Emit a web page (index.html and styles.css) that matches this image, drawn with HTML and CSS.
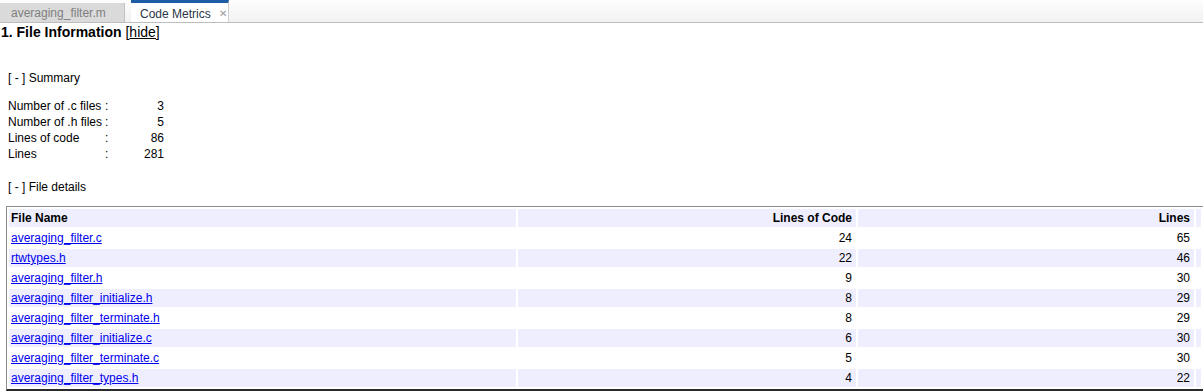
FILE: index.html
```html
<!DOCTYPE html>
<html>
<head>
<meta charset="utf-8">
<link rel="stylesheet" href="styles.css">
</head>
<body>
<div class="tabbar">
  <div class="tab tab-inactive">averaging_filter.m</div>
  <div class="tab tab-active"><span>Code Metrics</span><span class="close">✕</span></div>
</div>
<h3 class="section-title">1. File Information <span class="hide">[<u>hide</u>]</span></h3>

<div class="toggle toggle-summary">[ - ] Summary</div>
<table class="summary">
  <tr><td class="s-label">Number of .c files</td><td class="s-colon">:</td><td class="s-val">3</td></tr>
  <tr><td class="s-label">Number of .h files</td><td class="s-colon">:</td><td class="s-val">5</td></tr>
  <tr><td class="s-label">Lines of code</td><td class="s-colon">:</td><td class="s-val">86</td></tr>
  <tr><td class="s-label">Lines</td><td class="s-colon">:</td><td class="s-val">281</td></tr>
</table>

<div class="toggle toggle-details">[ - ] File details</div>
<table class="details">
  <colgroup>
    <col class="c-name"><col class="c-loc"><col class="c-lines"><col class="c-extra">
  </colgroup>
  <tr class="shade"><th class="left">File Name</th><th class="right">Lines of Code</th><th class="right">Lines</th><th></th></tr>
  <tr><td><a href="#">averaging_filter.c</a></td><td class="right">24</td><td class="right">65</td><td></td></tr>
  <tr class="shade"><td><a href="#">rtwtypes.h</a></td><td class="right">22</td><td class="right">46</td><td></td></tr>
  <tr><td><a href="#">averaging_filter.h</a></td><td class="right">9</td><td class="right">30</td><td></td></tr>
  <tr class="shade"><td><a href="#">averaging_filter_initialize.h</a></td><td class="right">8</td><td class="right">29</td><td></td></tr>
  <tr><td><a href="#">averaging_filter_terminate.h</a></td><td class="right">8</td><td class="right">29</td><td></td></tr>
  <tr class="shade"><td><a href="#">averaging_filter_initialize.c</a></td><td class="right">6</td><td class="right">30</td><td></td></tr>
  <tr><td><a href="#">averaging_filter_terminate.c</a></td><td class="right">5</td><td class="right">30</td><td></td></tr>
  <tr class="shade"><td><a href="#">averaging_filter_types.h</a></td><td class="right">4</td><td class="right">22</td><td></td></tr>
</table>
</body>
</html>
```

FILE: styles.css
```css
html, body {
  margin: 0;
  padding: 0;
  background: #ffffff;
  overflow: hidden;
}
body {
  font-family: "Liberation Sans", Arial, sans-serif;
  font-size: 12px;
  color: #000;
  width: 1203px;
  height: 391px;
}

/* tab bar */
.tabbar {
  height: 22px;
  border-bottom: 1px solid #bdbdbd;
  background: linear-gradient(#fdfdfd, #f2f2f2);
  display: flex;
  align-items: flex-end;
  gap: 6px;
}
.tab {
  box-sizing: border-box;
  height: 19px;
  font-size: 12px;
  line-height: 18px;
  display: flex;
  align-items: center;
}
.tab-inactive {
  width: 125px;
  padding-left: 11px;
  background: #dadada;
  color: #7f7f7f;
  border-right: 1px solid #c2c2c2;
}
.tab-active {
  width: 98px;
  height: 22px;
  padding-left: 9px;
  padding-top: 2px;
  background: #ffffff;
  color: #2b3547;
  border-top: 3px solid #1d5ca6;
  border-right: 1px solid #cfcfcf;
  align-self: flex-end;
}
.tab-active .close {
  margin-left: 8px;
  font-size: 10px;
  color: #9a9a9a;
}

/* heading */
.section-title {
  margin: 0;
  padding: 1px 0 0 1px;
  font-size: 14px;
  line-height: 16px;
  font-weight: bold;
}
.section-title .hide {
  font-weight: normal;
}

.toggle {
  margin-left: 8px;
  line-height: 14px;
}
.toggle-summary {
  margin-top: 31px;
}
.toggle-details {
  margin-top: 18px;
}

/* summary table */
.summary {
  margin: 13px 0 0 8px;
  border-collapse: collapse;
}
.summary td {
  padding: 0;
  height: 16px;
  line-height: 16px;
}
.s-label {
  width: 97px;
}
.s-colon {
  width: 10px;
}
.s-val {
  width: 49px;
  text-align: right;
}

/* details table */
.details {
  margin: 12px 0 0 6px;
  width: 1198px;
  table-layout: fixed;
  border-collapse: separate;
  border-spacing: 2px;
  border-style: solid;
  border-width: 1px 1px 2px 1px;
  border-color: #8c8c8c #2a2a2a #2a2a2a #8c8c8c;
}
.c-name { width: 507px; }
.c-loc { width: 338px; }
.c-lines { width: 336px; }
.c-extra { width: 5px; }
.details th, .details td {
  height: 18px;
  padding: 0 2px;
  line-height: 18px;
  white-space: nowrap;
  overflow: hidden;
}
.details td:last-child, .details th:last-child {
  padding: 0;
}
.details th {
  font-weight: bold;
}
.details .left { text-align: left; }
.details .right {
  text-align: right;
  padding-right: 4px;
}
.details tr.shade th, .details tr.shade td {
  background: #eeeeff;
}
.details a {
  color: #0000ee;
  text-decoration: underline;
}
```
